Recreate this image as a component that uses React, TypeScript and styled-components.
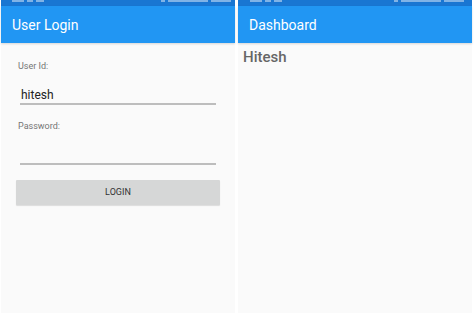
import React from 'react';
import styled, { createGlobalStyle } from 'styled-components';

const GlobalStyle = createGlobalStyle`
  html, body {
    margin: 0;
    padding: 0;
    background: #ffffff;
    font-family: Roboto, "Noto Sans", Arial, sans-serif;
  }
`;

const Screens = styled.div`
  display: flex;
  gap: 3px;
  padding: 0 1px;
  height: 313px;
`;

const Phone = styled.div`
  width: 234px;
  display: flex;
  flex-direction: column;
  background: #fafafa;
`;

const StatusBar = styled.div<{ $right?: boolean }>`
  height: 6px;
  background: #1976d2;
  display: flex;
  justify-content: space-between;
  align-items: flex-start;
  padding: ${(p) => (p.$right ? '0 8px 0 12px' : '0 4px 0 11px')};
`;

const StatusGroup = styled.div`
  display: flex;
  gap: 3px;
  height: 2px;
`;

const StatusBit = styled.span<{ $w: number }>`
  display: block;
  width: ${(p) => p.$w}px;
  height: 2px;
  background: rgba(255, 255, 255, 0.45);
`;

const AppBar = styled.div`
  height: 37px;
  background: #2196f3;
  color: #ffffff;
  font-size: 14px;
  display: flex;
  align-items: center;
  padding-left: 11px;
  box-shadow: 0 1px 2px rgba(0, 0, 0, 0.15);
`;

const Form = styled.div`
  display: flex;
  flex-direction: column;
  padding: 17px 15px 0 15px;
`;

const Label = styled.div`
  font-size: 9px;
  line-height: 12px;
  color: #757575;
  margin-left: 2px;
`;

const Input = styled.input`
  all: unset;
  display: block;
  margin: 15px 4px 15px 4px;
  height: 16px;
  line-height: 16px;
  font-size: 12px;
  color: #222222;
  padding-left: 1px;
  border-bottom: 2px solid #bdbdbd;
  font-family: inherit;
`;

const Button = styled.button`
  all: unset;
  height: 25px;
  background: #d6d7d7;
  color: #333333;
  font-size: 9px;
  font-family: inherit;
  text-align: center;
  line-height: 25px;
  box-shadow: 0 1px 1px rgba(0, 0, 0, 0.12);
  border-radius: 1px;
`;

const Name = styled.div`
  padding: 4px 5px 0;
  font-size: 15px;
  line-height: 20px;
  font-weight: 500;
  color: #666666;
`;

const Status = ({ right }: { right?: boolean }) => (
  <StatusBar $right={right}>
    <StatusGroup>
      <StatusBit $w={12} />
      <StatusBit $w={6} />
      <StatusBit $w={8} />
    </StatusGroup>
    <StatusGroup>
      <StatusBit $w={4} />
      <StatusBit $w={40} />
      <StatusBit $w={20} />
    </StatusGroup>
  </StatusBar>
);

export default function App() {
  return (
    <>
      <GlobalStyle />
      <Screens>
        <Phone>
          <Status />
          <AppBar>User Login</AppBar>
          <Form>
            <Label>User Id:</Label>
            <Input readOnly defaultValue="hitesh" />
            <Label>Password:</Label>
            <Input readOnly type="password" defaultValue="" />
            <Button>LOGIN</Button>
          </Form>
        </Phone>
        <Phone>
          <Status right />
          <AppBar>Dashboard</AppBar>
          <Name>Hitesh</Name>
        </Phone>
      </Screens>
    </>
  );
}
